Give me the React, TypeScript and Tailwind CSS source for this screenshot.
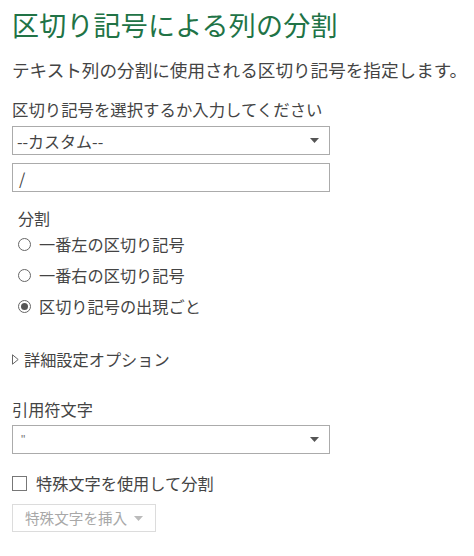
import React from 'react';

const font = { fontFamily: '"Noto Sans CJK JP", "Noto Sans", sans-serif' };

const Caret = ({ className = 'text-[#555]' }: { className?: string }) => (
  <svg width="9" height="5" viewBox="0 0 9 5" className={className}>
    <path d="M0 0h9L4.5 5z" fill="currentColor" />
  </svg>
);

const Radio = ({ checked }: { checked?: boolean }) => (
  <span className="w-[13px] h-[13px] rounded-full border border-[#666] flex items-center justify-center bg-white">
    {checked && <span className="w-[7px] h-[7px] rounded-full bg-[#555]" />}
  </span>
);

const options = ['一番左の区切り記号', '一番右の区切り記号', '区切り記号の出現ごと'];

export default function App() {
  return (
    <div style={font} className="w-[474px] h-[556px] bg-white text-[#444] px-[12px] pt-[7px] overflow-hidden">
      <h1 className="text-[27px] leading-[36px] text-[#217346] tracking-[0.2px]">区切り記号による列の分割</h1>
      <p className="mt-[14px] text-[17.6px] leading-[26px] whitespace-nowrap">テキスト列の分割に使用される区切り記号を指定します。</p>

      <div className="mt-[14px] text-[16.4px] leading-[24px]">区切り記号を選択するか入力してください</div>
      <div className="mt-[5px] w-[318px] h-[29px] border border-[#ababab] flex items-center justify-between pl-[4px] pr-[10px] text-[16px]">
        <span>--カスタム--</span>
        <Caret />
      </div>
      <div className="mt-[8px] w-[318px] h-[29px] border border-[#ababab] flex items-center pl-[6px] text-[16px]">/</div>

      <div className="mt-[15px] pl-[6px] text-[16px] leading-[22px]">分割</div>
      <div className="pl-[6px]">
        {options.map((o, i) => (
          <div key={o} className="h-[31px] flex items-center gap-[8px] text-[16.2px]">
            <Radio checked={i === 2} />
            <span>{o}</span>
          </div>
        ))}
      </div>

      <div className="mt-[25px] flex items-center gap-[5px] text-[16.2px] leading-[24px]">
        <svg width="7" height="11" viewBox="0 0 7 11" className="text-[#666]">
          <path d="M0.5 0.8L6.2 5.5L0.5 10.2z" fill="none" stroke="currentColor" strokeWidth="1" />
        </svg>
        <span>詳細設定オプション</span>
      </div>

      <div className="mt-[26px] text-[16.2px] leading-[24px]">引用符文字</div>
      <div className="mt-[4px] w-[318px] h-[29px] border border-[#ababab] flex items-center justify-between pl-[8px] pr-[10px]">
        <span className="text-[12px] text-[#777]" style={{ fontFamily: '"Liberation Sans", sans-serif' }}>"</span>
        <Caret />
      </div>

      <div className="mt-[17px] flex items-center gap-[9px] text-[16.2px] leading-[24px]">
        <span className="w-[15px] h-[15px] border border-[#777] bg-white" />
        <span>特殊文字を使用して分割</span>
      </div>
      <div className="mt-[9px] w-[144px] h-[28px] border border-[#dcdcdc] flex items-center justify-between pl-[12px] pr-[12px] text-[14.6px] text-[#a8a8a8]">
        <span>特殊文字を挿入</span>
        <Caret className="text-[#bbb]" />
      </div>
    </div>
  );
}
